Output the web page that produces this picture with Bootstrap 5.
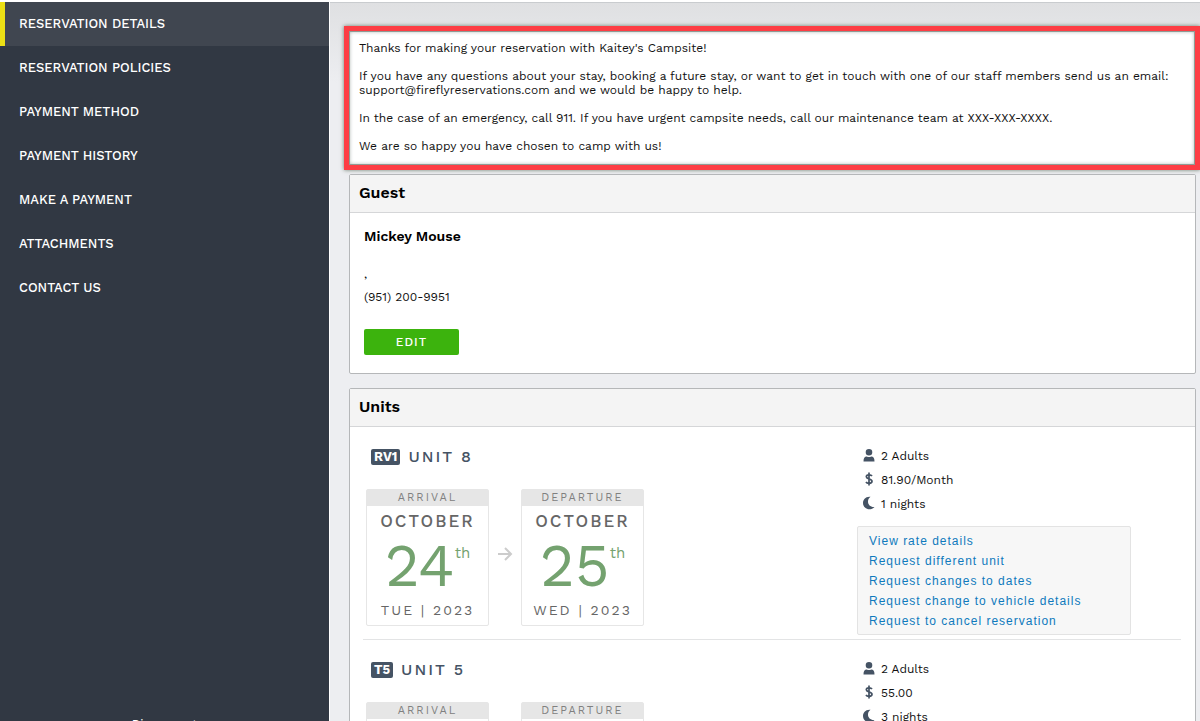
<!DOCTYPE html>
<html lang="en">
<head>
<meta charset="utf-8">
<meta name="viewport" content="width=device-width, initial-scale=1">
<title>Reservation Details</title>
<link href="https://cdn.jsdelivr.net/npm/bootstrap@5.3.0/dist/css/bootstrap.min.css" rel="stylesheet">
<style>
  body { font-family: "Work Sans", Inter, "Liberation Sans", sans-serif; font-size: 12px; line-height: 14px; color: #111; background: #edeef1; }
  .shell { height: 100vh; overflow: hidden; border-top: 2px solid #fff; }
  .sidebar { width: 330px; background: #313843; border-right: 1px solid #fff; }
  .sidebar .nav { min-height: calc(100% - 5px); }
  .sidebar .nav-link { color: #fff; font-size: 13px; line-height: 20px; font-weight: 500; padding: 12px 14px; border-left: 5px solid transparent; border-radius: 0; text-transform: uppercase; }
  .sidebar .nav-link.active { background: #404650; border-left-color: #ece015; }
  .sidebar .leave { color: #fff; font-size: 12px; line-height: 16px; text-decoration: none; }
  .content { min-width: 0; padding: 23px 0 0 14px; background: linear-gradient(#dfe0e2, #edeef1 80px); border-top: 1px solid #c9cccf; }
  .notice { border: 5px solid #fd3d44; background: #fff; padding: 10px 9px 12px 10px; box-shadow: 0 0 4px #6b7a6b, inset 0 0 0 1px #8f9a94, inset 0 0 4px #8f9a94; }
  .notice p { margin-bottom: 14px; }
  .panel { border: 1px solid #b5b7b9; border-radius: 2px; margin: 0 4px 14px 5px; background: #fff; }
  .panel .card-header { background: #f4f4f4; border-bottom: 1px solid #d5d6d8; padding: 8px 9px 9px; border-radius: 0; }
  .panel h2 { font-size: 16px; line-height: 20px; font-weight: 600; margin: 0; color: #000; }
  .guest { padding: 13px 14px 18px; line-height: 23px; }
  .guest-name { font-size: 14px; line-height: 20px; font-weight: 600; color: #000; margin-bottom: 17px; }
  .btn-edit { display: block; width: 95px; height: 26px; margin-top: 20px; padding: 0; background: #3cb30d; color: #fff; font-size: 12px; line-height: 26px; font-weight: 500; letter-spacing: 1px; border: 0; border-radius: 2px; }
  .btn-edit:hover { background: #329a0a; color: #fff; }
  .unit { margin: 0 14px 0 13px; padding: 20px 3px 4px; border-bottom: 1px solid #e3e4e5; }
  .unit-title { font-size: 16px; line-height: 20px; font-weight: 500; letter-spacing: 2px; color: #455364; margin: 0 0 22px 5px; }
  .unit-code { background: #455364; color: #fff; font-size: 13px; line-height: 16px; font-weight: 700; letter-spacing: 0; padding: 0 3px; border-radius: 2px; }
  .date-box { width: 123px; min-height: 137px; border: 1px solid #e6e6e6; border-radius: 2px; text-align: center; color: #666; }
  .date-label { background: #e6e6e6; font-size: 11px; line-height: 16px; letter-spacing: 2px; color: #808080; }
  .date-month { font-size: 17px; line-height: 20px; font-weight: 500; letter-spacing: 2px; padding-top: 5px; }
  .date-day { font-size: 60px; line-height: 60px; color: #74a26f; padding-top: 5px; }
  .date-day span { font-size: 15px; line-height: 20px; margin-top: 7px; }
  .date-week { font-size: 14px; line-height: 20px; letter-spacing: 2px; padding: 4px 0 5px; }
  .unit-side { width: 321px; }
  .facts { margin-bottom: 7px; }
  .facts li { height: 24px; line-height: 18px; gap: 5px; padding-left: 5px; }
  .actions { width: 274px; padding: 4px 11px 3px; background: #f7f7f7; border: 1px solid #e3e3e3; border-radius: 2px; font-family: "Liberation Sans", Arial, sans-serif; font-size: 12px; line-height: 20px; letter-spacing: 1px; }
  .actions a { color: #0f7abd; text-decoration: none; }
</style>
</head>
<body>
<svg class="d-none">
  <symbol id="person" viewBox="0 0 14 16"><path fill="#455364" d="M7 2a3.300 3.300 0 1 1 0 6.600 3.300 3.300 0 0 1 0-6.600zM1.500 14.500c0-3.500 1-5 3.300-5 1.400.8 3 .8 4.400 0 2.300 0 3.300 1.500 3.300 5z"/></symbol>
  <symbol id="dollar" viewBox="0 0 14 16"><path fill="none" stroke="#455364" stroke-width="1.700" d="M10 5C9 3.500 4.300 3.200 4.300 5.800 4.300 8.300 10 7.400 10 10.300 10 13 5 12.800 4 11M7 1.500v13"/></symbol>
  <symbol id="moon" viewBox="0 0 14 16"><path fill="#455364" d="M8.500 1.800C3.500 1.300 1 4.600 1 8c0 6 7.500 8.500 11.500 4C8.500 12.300 6 9.800 6 6.500 6 4.600 7 3 8.500 1.800z"/></symbol>
  <symbol id="arrow" viewBox="0 0 16 16"><path fill="none" stroke="#ccc" stroke-width="2" d="M1 8h13M8 2l6 6-6 6"/></symbol>
</svg>
<div class="shell d-flex">
  <aside class="sidebar flex-shrink-0">
    <nav class="nav flex-column" aria-label="Reservation">
      <a class="nav-link active" aria-current="page" href="#">Reservation Details</a>
      <a class="nav-link" href="#">Reservation Policies</a>
      <a class="nav-link" href="#">Payment Method</a>
      <a class="nav-link" href="#">Payment History</a>
      <a class="nav-link" href="#">Make a Payment</a>
      <a class="nav-link" href="#">Attachments</a>
      <a class="nav-link" href="#">Contact Us</a>
    </nav>
    <div class="text-center"><a class="leave" href="#">Disconnect</a></div>
  </aside>
  <main class="content flex-grow-1">
    <section class="notice mb-1">
      <p>Thanks for making your reservation with Kaitey's Campsite!</p>
      <p>If you have any questions about your stay, booking a future stay, or want to get in touch with one of our staff members send us an email:<br>support@fireflyreservations.com and we would be happy to help.</p>
      <p>In the case of an emergency, call 911. If you have urgent campsite needs, call our maintenance team at XXX-XXX-XXXX.</p>
      <p class="mb-0">We are so happy you have chosen to camp with us!</p>
    </section>
    <section class="card panel">
      <div class="card-header"><h2>Guest</h2></div>
      <div class="guest">
        <div class="guest-name">Mickey Mouse</div>
        <div>,</div>
        <div>(951) 200-9951</div>
        <button type="button" class="btn btn-edit">EDIT</button>
      </div>
    </section>
    <section class="card panel">
      <div class="card-header"><h2>Units</h2></div>
      <article class="unit d-flex justify-content-between">
        <div>
          <h3 class="unit-title d-flex align-items-center gap-2"><span class="unit-code">RV1</span>UNIT 8</h3>
          <div class="d-flex align-items-center">
            <div class="date-box"><div class="date-label">ARRIVAL</div><div class="date-month">OCTOBER</div><div class="date-day d-flex justify-content-center">24<span>th</span></div><div class="date-week">TUE | 2023</div></div>
            <svg class="mx-2 mb-2" width="16" height="16" aria-hidden="true"><use href="#arrow"/></svg>
            <div class="date-box"><div class="date-label">DEPARTURE</div><div class="date-month">OCTOBER</div><div class="date-day d-flex justify-content-center">25<span>th</span></div><div class="date-week">WED | 2023</div></div>
          </div>
        </div>
        <div class="unit-side">
          <ul class="facts list-unstyled">
            <li class="d-flex"><svg width="14" height="16" aria-hidden="true"><use href="#person"/></svg>2 Adults</li>
            <li class="d-flex"><svg width="14" height="16" aria-hidden="true"><use href="#dollar"/></svg>81.90/Month</li>
            <li class="d-flex"><svg width="14" height="16" aria-hidden="true"><use href="#moon"/></svg>1 nights</li>
          </ul>
          <ul class="actions list-unstyled mb-0">
            <li><a href="#">View rate details</a></li>
            <li><a href="#">Request different unit</a></li>
            <li><a href="#">Request changes to dates</a></li>
            <li><a href="#">Request change to vehicle details</a></li>
            <li><a href="#">Request to cancel reservation</a></li>
          </ul>
        </div>
      </article>
      <article class="unit d-flex justify-content-between">
        <div>
          <h3 class="unit-title d-flex align-items-center gap-2"><span class="unit-code">T5</span>UNIT 5</h3>
          <div class="d-flex align-items-center">
            <div class="date-box"><div class="date-label">ARRIVAL</div></div>
            <svg class="mx-2 mb-2" width="16" height="16" aria-hidden="true"><use href="#arrow"/></svg>
            <div class="date-box"><div class="date-label">DEPARTURE</div></div>
          </div>
        </div>
        <div class="unit-side">
          <ul class="facts list-unstyled">
            <li class="d-flex"><svg width="14" height="16" aria-hidden="true"><use href="#person"/></svg>2 Adults</li>
            <li class="d-flex"><svg width="14" height="16" aria-hidden="true"><use href="#dollar"/></svg>55.00</li>
            <li class="d-flex"><svg width="14" height="16" aria-hidden="true"><use href="#moon"/></svg>3 nights</li>
          </ul>
        </div>
      </article>
    </section>
  </main>
</div>
<script src="https://cdn.jsdelivr.net/npm/bootstrap@5.3.0/dist/js/bootstrap.bundle.min.js"></script>
</body>
</html>
